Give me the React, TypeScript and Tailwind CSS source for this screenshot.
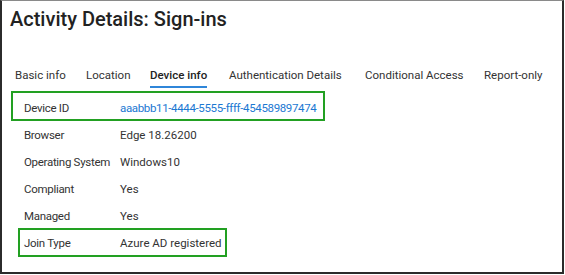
const tabs = [
  { label: "Basic info", w: "w-[71px]" },
  { label: "Location", w: "w-[64px]" },
  { label: "Device info", w: "w-[79px]", active: true },
  { label: "Authentication Details", w: "w-[136px]" },
  { label: "Conditional Access", w: "w-[119px]" },
  { label: "Report-only", w: "w-auto" },
];

const rows = [
  { label: "Device ID", value: "aaabbb11-4444-5555-ffff-454589897474", link: true, box: "wide" },
  { label: "Browser", value: "Edge 18.26200" },
  { label: "Operating System", value: "Windows10" },
  { label: "Compliant", value: "Yes" },
  { label: "Managed", value: "Yes" },
  { label: "Join Type", value: "Azure AD registered", box: "narrow" },
];

export default function App() {
  return (
    <div
      className="w-[565px] h-[275px] bg-white"
      style={{ fontFamily: 'Roboto, Lato, sans-serif' }}
    >
      <div className="w-[564px] h-[274px] border-t border-t-[#8a8a8a] border-x-2 border-b-2 border-[#2b2b2b] pl-[8px]">
        <h1 className="text-[20px] leading-[30px] font-medium text-[#222] mt-[3px]">
          Activity Details: Sign-ins
        </h1>

        {/* tabs */}
        <div className="flex mt-[31px] pl-[5px] text-[11.5px] text-[#333]">
          {tabs.map((t) => (
            <div key={t.label} className={`${t.w} shrink-0 whitespace-nowrap`}>
              <div
                className={`inline-flex flex-col ${t.active ? "font-medium text-[#222]" : ""}`}
              >
                <span className="leading-[20px]">{t.label}</span>
                <span
                  className={`h-[2px] mt-[1px] ${t.active ? "bg-[#2f86d9]" : "bg-transparent"}`}
                />
              </div>
            </div>
          ))}
        </div>

        {/* details */}
        <div className="mt-[7px] text-[11.5px] text-[#333]">
          {rows.map((r) => (
            <div key={r.label} className="relative flex items-center h-[27px] pl-[14px] whitespace-nowrap">
              {r.box === "wide" && (
                <span className="absolute left-[1px] top-[-4px] w-[314px] h-[30px] border-2 border-[#22a022]" />
              )}
              {r.box === "narrow" && (
                <span className="absolute left-[8px] top-[-2px] w-[209px] h-[29px] border-2 border-[#22a022]" />
              )}
              <span className="w-[96px] shrink-0 tracking-[-0.3px]">{r.label}</span>
              <span className={r.link ? "text-[#1b78d2] tracking-[-0.35px]" : ""}>{r.value}</span>
            </div>
          ))}
        </div>
      </div>
    </div>
  );
}
